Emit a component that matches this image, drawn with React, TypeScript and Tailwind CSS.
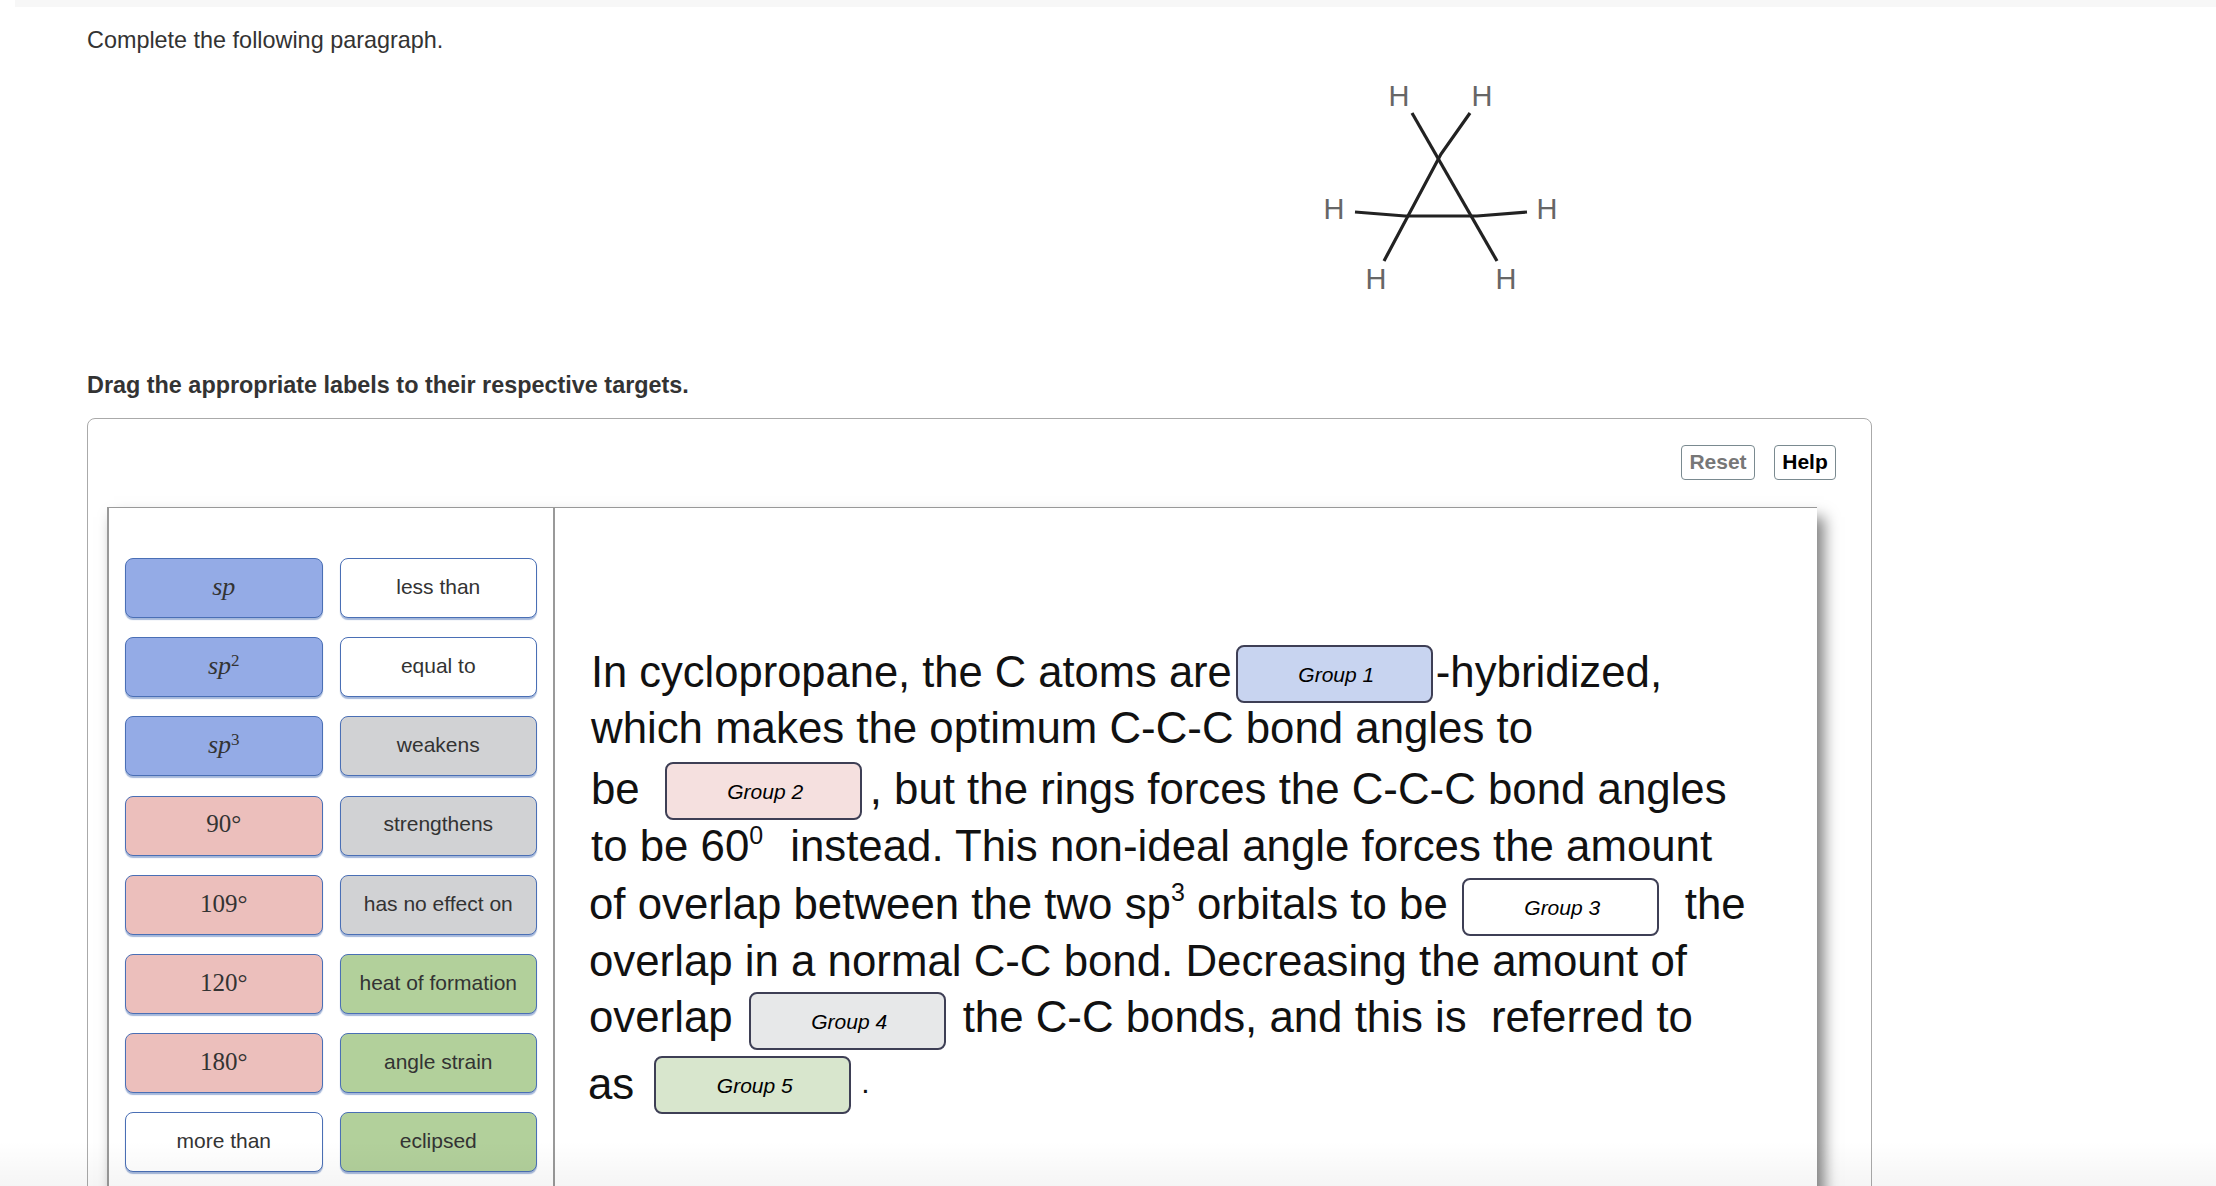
const labels = [
  { id: "sp", color: "bg-[#94abe6]", math: true, sup: "" },
  { id: "less than", color: "bg-white" },
  { id: "sp2", text: "sp", color: "bg-[#94abe6]", math: true, sup: "2" },
  { id: "equal to", color: "bg-white" },
  { id: "sp3", text: "sp", color: "bg-[#94abe6]", math: true, sup: "3" },
  { id: "weakens", color: "bg-[#d1d2d4]" },
  { id: "90°", color: "bg-[#ecbfbc]", num: true },
  { id: "strengthens", color: "bg-[#d1d2d4]" },
  { id: "109°", color: "bg-[#ecbfbc]", num: true },
  { id: "has no effect on", color: "bg-[#d1d2d4]" },
  { id: "120°", color: "bg-[#ecbfbc]", num: true },
  { id: "heat of formation", color: "bg-[#b2d09b]" },
  { id: "180°", color: "bg-[#ecbfbc]", num: true },
  { id: "angle strain", color: "bg-[#b2d09b]" },
  { id: "more than", color: "bg-white" },
  { id: "eclipsed", color: "bg-[#b2d09b]" },
];

function Molecule() {
  const hs = [
    [89, 37],
    [172, 37],
    [24, 150],
    [237, 150],
    [66, 220],
    [196, 220],
  ];
  return (
    <svg width="260" height="240" viewBox="0 0 260 240" className="mt-[6px] ml-[1223px] block">
      <g fill="none" stroke="#222" strokeWidth="3.2">
        <path d="M102 52 L187 200" />
        <path d="M160 52 L131 93 L74 200" />
        <path d="M45 151 L95 155 L167 155 L217 151" />
      </g>
      {hs.map(([x, y], i) => (
        <text
          key={i}
          x={x}
          y={y}
          fill="#666"
          fontSize="29"
          textAnchor="middle"
          dominantBaseline="middle"
          fontFamily="Liberation Sans, sans-serif"
        >
          H
        </text>
      ))}
    </svg>
  );
}

function DropZone({ name, color, className }: { name: string; color: string; className: string }) {
  return (
    <div
      className={`flex h-[58px] w-[197px] shrink-0 items-center justify-center rounded-lg border-2 border-[#3e3f55] pl-1 text-[21px] leading-none text-black italic ${color} ${className}`}
    >
      {name}
    </div>
  );
}

export default function App() {
  return (
    <div className="relative h-[1186px] w-full overflow-hidden bg-white font-['Liberation_Sans',sans-serif] text-[#333]">
      <div className="ml-[15px] h-[7px] bg-[#f7f7f7]" />

      <div className="pl-[87px]">
        <p className="mt-[18px] text-[23.4px] leading-[30px]">Complete the following paragraph.</p>
        <Molecule />
        <p className="mt-[69px] text-[23.4px] leading-[30px] font-bold">Drag the appropriate labels to their respective targets.</p>

        <div className="mt-[18px] h-[900px] w-[1785px] rounded-lg border border-[#aaa] pt-[26px]">
          <div className="flex h-[35px] justify-end gap-[19px] pr-[35px]">
            <button className="w-[74px] rounded border border-[#7a8a90] pb-[2px] text-[21px] font-bold text-[#777]">Reset</button>
            <button className="w-[62px] rounded border border-[#7a8a90] pb-[2px] text-[21px] font-bold text-black">Help</button>
          </div>

          <div className="mt-[27px] ml-[19px] flex h-[800px] w-[1710px] border-t border-l-2 border-[#999] shadow-[7px_10px_14px_0_rgba(0,0,0,0.5)]">
            <div className="w-[444px] shrink-0 bg-white pt-[50px] pl-[16px]">
              <div className="grid w-[412px] grid-cols-2 gap-x-[17px] gap-y-[19.2px]">
                {labels.map((l) => (
                  <div
                    key={l.id}
                    className={`flex h-[60px] items-center justify-center rounded-lg border border-[#4a6fb5] pb-[3px] shadow-[0_2px_1px_rgba(74,111,181,0.5)] ${l.color} ${
                      l.math
                        ? "font-['Liberation_Serif',serif] text-[26px] italic"
                        : l.num
                          ? "font-['Liberation_Serif',serif] text-[25px]"
                          : "text-[21px]"
                    }`}
                  >
                    {l.math ? (
                      <span>
                        {l.text ?? l.id}
                        {l.sup && <sup className="text-[17px] not-italic">{l.sup}</sup>}
                      </span>
                    ) : (
                      l.id
                    )}
                  </div>
                ))}
              </div>
            </div>

            <div className="flex-1 border-l-2 border-[#999] bg-white pt-[135px] text-[43.8px] leading-[58px] whitespace-nowrap text-[#111]">
              <div className="flex h-[56px] pl-[36px]">
                <span className="text-[43.5px]">In cyclopropane, the C atoms are</span>
                <DropZone name="Group 1" color="bg-[#c8d4f0]" className="mt-[2px] ml-[4px]" />
                <span className="ml-[3px]">-hybridized,</span>
              </div>
              <div className="h-[61px] pl-[36px]">which makes the optimum C-C-C bond angles to</div>
              <div className="flex h-[57px] pl-[36px]">
                <span>be</span>
                <DropZone name="Group 2" color="bg-[#f5e0df]" className="mt-[2px] ml-[25px]" />
                <span className="ml-[8px]">, but the rings forces the C-C-C bond angles</span>
              </div>
              <div className="h-[58px] pl-[36px]">
                to be 60<sup className="top-[-17px] text-[25px] leading-none">0</sup>
                <span className="ml-[27px]">instead. This non-ideal angle forces the amount</span>
              </div>
              <div className="flex h-[57px] pl-[34px]">
                <span>
                  of overlap between the two sp<sup className="top-[-18px] text-[25px] leading-none">3</sup> orbitals to be
                </span>
                <DropZone name="Group 3" color="bg-white" className="mt-[3px] ml-[14px]" />
                <span className="ml-[26px]">the</span>
              </div>
              <div className="h-[56px] pl-[34px]">overlap in a normal C-C bond. Decreasing the amount of</div>
              <div className="flex h-[63px] pl-[34px]">
                <span>overlap</span>
                <DropZone name="Group 4" color="bg-[#e7e8e9]" className="mt-[4px] ml-[16px]" />
                <span className="ml-[17px]">the C-C bonds, and this is&nbsp; referred to</span>
              </div>
              <div className="flex pl-[33px]">
                <span className="mt-[4px]">as</span>
                <DropZone name="Group 5" color="bg-[#d8e6cd]" className="mt-[5px] ml-[20px]" />
                <span className="ml-[10px] text-[30px] leading-[64px]">.</span>
              </div>
            </div>
          </div>
        </div>
      </div>

      <div className="pointer-events-none absolute inset-x-0 bottom-0 h-[45px] bg-gradient-to-b from-transparent to-[rgba(0,0,0,0.04)]" />
    </div>
  );
}
